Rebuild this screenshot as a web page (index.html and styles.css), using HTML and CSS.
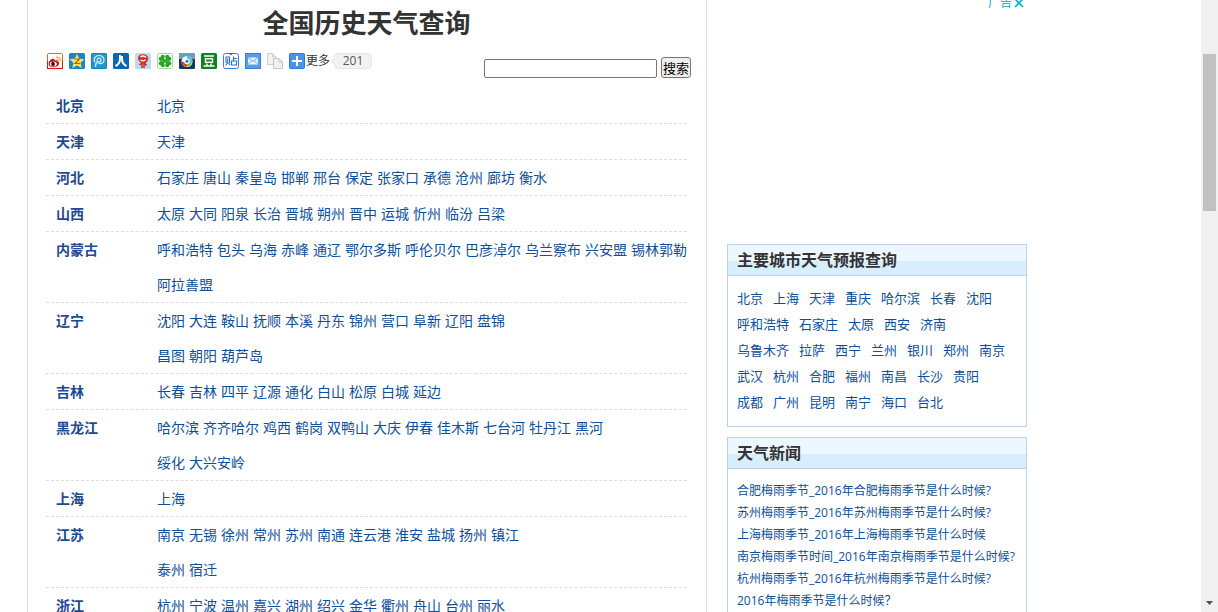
FILE: index.html
```html
<!DOCTYPE html>
<html lang="zh-CN">

<head>
  <meta charset="UTF-8" />
  <meta name="viewport" content="width=device-width, initial-scale=1.0" />
  <title>全国历史天气查询</title>
  <link rel="stylesheet" href="styles.css">
</head>

<body>
  <div class="viewport">
    <div class="wrap">
      <main class="main">
        <h1>全国历史天气查询</h1>
        <div class="toolbar">
          <div class="share">
            <a href="#" title="新浪微博"><svg viewBox="0 0 16 16"><rect x=".5" y=".5" width="15" height="15" rx="1" fill="#fff" stroke="#f0601f"/><path d="M0 15.500h16M.5 8v7M15.500 8v7" stroke="#d8191f"/><path d="M1.500 11c0-3 3.500-6 5.500-5 1 .4.500 1.500.5 1.500s3-1 3.200.8c2 .7 2 3.200 0 4.700C8 15 1.500 14.500 1.500 11z" fill="#d5141d"/><ellipse cx="6.300" cy="11" rx="3.500" ry="2.300" fill="#fff"/><circle cx="6" cy="11" r="1.900" fill="#111"/><path d="M9 4.200c3-.8 5 1.200 4.300 4.300M9.500 6.200c1.500-.2 2.200.5 1.900 1.900" fill="none" stroke="#f4a11a" stroke-width="1.100"/></svg></a>
            <a href="#" title="QQ空间"><svg viewBox="0 0 16 16"><rect width="16" height="16" rx="1.500" fill="#1684ce"/><path d="M8 .8l2.200 4.800 5.300.6-3.900 3.600 1.100 5.200L8 12.400 3.300 15l1.100-5.200L.5 6.200l5.300-.6z" fill="#ffe04a"/><path d="M5.500 6h5L6 10.500h5" fill="none" stroke="#a36b13" stroke-width="1.200"/></svg></a>
            <a href="#" title="腾讯微博"><svg viewBox="0 0 16 16"><rect width="16" height="16" rx="1.500" fill="#2698c8"/><rect x=".5" y=".5" width="15" height="15" rx="1" fill="none" stroke="#1685b3"/><path d="M4.200 9.500C1.500 5 5 2.500 8 2.500c4 0 6 3 4.700 6-1 2.300-4 2.700-5.200 1.500M10 7c0 1.200-1 2-2 2S6.200 8.200 6.200 7 7 5.200 8 5.200 10 5.900 10 7zM6.500 8.500C5 10 4.500 12 4.500 14" fill="none" stroke="#d4f1fb" stroke-width="1.200"/></svg></a>
            <a href="#" title="人人网"><svg viewBox="0 0 16 16"><rect width="16" height="16" rx="1.500" fill="#0866b2"/><path d="M7 2v4c0 3-1.500 5.500-4.500 7M9 3v3c0 3 1.500 5.500 4.500 7" fill="none" stroke="#fff" stroke-width="2"/></svg></a>
            <a href="#" title="开心网"><svg viewBox="0 0 16 16"><rect width="16" height="16" rx="1.500" fill="#b9dcf4"/><path d="M3 5C3 2 6 .8 8.500 1.200 12 1.500 14 4 13 7c-.6 2.300-2.500 3.500-4.500 3.500S3 8.500 3 5z" fill="#e32920"/><path d="M5.500 4c2-1.500 4-1 5.500.5M5.500 7c2 1.500 3.500 1 5-.3" fill="none" stroke="#fff" stroke-width="1.300"/><path d="M7 10l-2.500 2M7 10v5M9 10v5M9.500 10l2 2.500" stroke="#cf1d18" stroke-width="1.400"/></svg></a>
            <a href="#" title="朋友网"><svg viewBox="0 0 16 16"><rect x=".5" y=".5" width="15" height="15" rx="1" fill="#f8fff3" stroke="#a9d9a0"/><g fill="#26a52a"><circle cx="5.800" cy="3.700" r="2"/><circle cx="3.700" cy="5.800" r="2"/><circle cx="10.200" cy="3.700" r="2"/><circle cx="12.300" cy="5.800" r="2"/><circle cx="5.800" cy="12.300" r="2"/><circle cx="3.700" cy="10.200" r="2"/><circle cx="10.200" cy="12.300" r="2"/><circle cx="12.300" cy="10.200" r="2"/><path d="M3 7.500l3-4.500 2 4 2-4 3 4.500L9 8l4 .5-3 4.500-2-4-2 4-3-4.500L7 8z"/></g></svg></a>
            <a href="#" title="搜狐微博"><svg viewBox="0 0 16 16"><rect width="16" height="16" rx="1.500" fill="#12395f"/><path d="M0 1.500A1.500 1.500 0 011.500 0h13A1.500 1.500 0 0116 1.500V6H0z" fill="#6f9db5"/><circle cx="8" cy="8.500" r="5.500" fill="#f4fafc"/><path d="M8 2c3 1 5.500 3.500 5.500 7L11 10 8 5z" fill="#64b9e8"/><path d="M3 10c1 4.500 8 5 10-.5L10.500 9 8 11.500z" fill="#76b82f"/><path d="M2.500 8.500c0 3 2 5 5 5.200L8 11.500 5 9z" fill="#e03b25"/><circle cx="8" cy="8.500" r="2.800" fill="#fff"/><circle cx="8" cy="8.300" r="1.500" fill="#1976b6"/></svg></a>
            <a href="#" title="豆瓣"><svg viewBox="0 0 16 16"><rect width="16" height="16" rx="1.500" fill="#108020"/><path d="M3 3h10M4.500 5.800h7v3.400h-7zM5.500 10.500l1 2M10.500 10.500l-1 2M2.500 13h11" fill="none" stroke="#fff" stroke-width="1.400"/></svg></a>
            <a href="#" title="百度贴吧"><svg viewBox="0 0 16 16"><rect x=".5" y=".5" width="15" height="15" rx="2" fill="#fff" stroke="#377edb"/><path d="M6 0h4L8 2.500z" fill="#e31b1b"/><path d="M3 10V4h3.500v6M4.750 5.500v4L2.500 12.500M5.500 10l1.500 2M10.500 3.500v4M10.500 5.500H14M8.500 8h5v4h-5z" fill="none" stroke="#2a70d2" stroke-width="1.100"/></svg></a>
            <a href="#" title="邮件"><svg viewBox="0 0 16 16"><rect x=".5" y=".5" width="15" height="15" fill="#5a9cec" stroke="#3c7fd4"/><rect x="3" y="4.500" width="10" height="7" fill="#eaf4ff"/><path d="M3 4.500l5 4 5-4M3 11.500L6.500 8M13 11.500L9.500 8" fill="none" stroke="#6fa8ec"/></svg></a>
            <a href="#" title="复制网址"><svg viewBox="0 0 16 16"><path d="M.5.500h5L9 4v7.500H.5z" fill="#f1f1f1" stroke="#cfcfcf"/><path d="M5.500.5V4H9" fill="none" stroke="#cfcfcf"/><path d="M6.500 5.500H12l3.500 3.500v6.500h-9z" fill="#f1f1f1" stroke="#c4c4c4"/><path d="M12 5.500V9h3.500" fill="none" stroke="#c4c4c4"/></svg></a>
            <a href="#" class="more"><svg viewBox="0 0 16 16"><rect x=".5" y=".5" width="15" height="15" rx="1" fill="#4d93e8" stroke="#2f76d0"/><path d="M8 3v10M3 8h10" stroke="#fff" stroke-width="2"/></svg>更多</a>
            <a href="#" class="count">201</a>
          </div>
          <form class="search" action="#">
            <input type="text" name="keyword" aria-label="城市名称">
            <button type="submit">搜索</button>
          </form>
        </div>

        <dl class="province">
          <dt><a href="#">北京</a></dt>
          <dd>
            <p><a href="#">北京</a></p>
          </dd>
        </dl>
        <dl class="province">
          <dt><a href="#">天津</a></dt>
          <dd>
            <p><a href="#">天津</a></p>
          </dd>
        </dl>
        <dl class="province">
          <dt><a href="#">河北</a></dt>
          <dd>
            <p><a href="#">石家庄</a><a href="#">唐山</a><a href="#">秦皇岛</a><a href="#">邯郸</a><a href="#">邢台</a><a href="#">保定</a><a href="#">张家口</a><a href="#">承德</a><a href="#">沧州</a><a href="#">廊坊</a><a href="#">衡水</a></p>
          </dd>
        </dl>
        <dl class="province">
          <dt><a href="#">山西</a></dt>
          <dd>
            <p><a href="#">太原</a><a href="#">大同</a><a href="#">阳泉</a><a href="#">长治</a><a href="#">晋城</a><a href="#">朔州</a><a href="#">晋中</a><a href="#">运城</a><a href="#">忻州</a><a href="#">临汾</a><a href="#">吕梁</a></p>
          </dd>
        </dl>
        <dl class="province">
          <dt><a href="#">内蒙古</a></dt>
          <dd>
            <p><a href="#">呼和浩特</a><a href="#">包头</a><a href="#">乌海</a><a href="#">赤峰</a><a href="#">通辽</a><a href="#">鄂尔多斯</a><a href="#">呼伦贝尔</a><a href="#">巴彦淖尔</a><a href="#">乌兰察布</a><a href="#">兴安盟</a><a href="#">锡林郭勒</a></p>
            <p><a href="#">阿拉善盟</a></p>
          </dd>
        </dl>
        <dl class="province">
          <dt><a href="#">辽宁</a></dt>
          <dd>
            <p><a href="#">沈阳</a><a href="#">大连</a><a href="#">鞍山</a><a href="#">抚顺</a><a href="#">本溪</a><a href="#">丹东</a><a href="#">锦州</a><a href="#">营口</a><a href="#">阜新</a><a href="#">辽阳</a><a href="#">盘锦</a></p>
            <p><a href="#">昌图</a><a href="#">朝阳</a><a href="#">葫芦岛</a></p>
          </dd>
        </dl>
        <dl class="province">
          <dt><a href="#">吉林</a></dt>
          <dd>
            <p><a href="#">长春</a><a href="#">吉林</a><a href="#">四平</a><a href="#">辽源</a><a href="#">通化</a><a href="#">白山</a><a href="#">松原</a><a href="#">白城</a><a href="#">延边</a></p>
          </dd>
        </dl>
        <dl class="province">
          <dt><a href="#">黑龙江</a></dt>
          <dd>
            <p><a href="#">哈尔滨</a><a href="#">齐齐哈尔</a><a href="#">鸡西</a><a href="#">鹤岗</a><a href="#">双鸭山</a><a href="#">大庆</a><a href="#">伊春</a><a href="#">佳木斯</a><a href="#">七台河</a><a href="#">牡丹江</a><a href="#">黑河</a></p>
            <p><a href="#">绥化</a><a href="#">大兴安岭</a></p>
          </dd>
        </dl>
        <dl class="province">
          <dt><a href="#">上海</a></dt>
          <dd>
            <p><a href="#">上海</a></p>
          </dd>
        </dl>
        <dl class="province">
          <dt><a href="#">江苏</a></dt>
          <dd>
            <p><a href="#">南京</a><a href="#">无锡</a><a href="#">徐州</a><a href="#">常州</a><a href="#">苏州</a><a href="#">南通</a><a href="#">连云港</a><a href="#">淮安</a><a href="#">盐城</a><a href="#">扬州</a><a href="#">镇江</a></p>
            <p><a href="#">泰州</a><a href="#">宿迁</a></p>
          </dd>
        </dl>
        <dl class="province">
          <dt><a href="#">浙江</a></dt>
          <dd>
            <p><a href="#">杭州</a><a href="#">宁波</a><a href="#">温州</a><a href="#">嘉兴</a><a href="#">湖州</a><a href="#">绍兴</a><a href="#">金华</a><a href="#">衢州</a><a href="#">舟山</a><a href="#">台州</a><a href="#">丽水</a></p>
          </dd>
        </dl>
      </main>

      <aside class="side">
        <div class="ad">
          <span>广告</span>
          <svg viewBox="0 0 10 8"><path d="M1-1l8 8M9-1L1 7" stroke="#00aecd" stroke-width="1.600"/></svg>
        </div>

        <section class="box">
          <h2>主要城市天气预报查询</h2>
          <div class="cities">
            <p><a href="#">北京</a><a href="#">上海</a><a href="#">天津</a><a href="#">重庆</a><a href="#">哈尔滨</a><a href="#">长春</a><a href="#">沈阳</a></p>
            <p><a href="#">呼和浩特</a><a href="#">石家庄</a><a href="#">太原</a><a href="#">西安</a><a href="#">济南</a></p>
            <p><a href="#">乌鲁木齐</a><a href="#">拉萨</a><a href="#">西宁</a><a href="#">兰州</a><a href="#">银川</a><a href="#">郑州</a><a href="#">南京</a></p>
            <p><a href="#">武汉</a><a href="#">杭州</a><a href="#">合肥</a><a href="#">福州</a><a href="#">南昌</a><a href="#">长沙</a><a href="#">贵阳</a></p>
            <p><a href="#">成都</a><a href="#">广州</a><a href="#">昆明</a><a href="#">南宁</a><a href="#">海口</a><a href="#">台北</a></p>
          </div>
        </section>

        <section class="box">
          <h2>天气新闻</h2>
          <ul class="news">
            <li><a href="#">合肥梅雨季节_2016年合肥梅雨季节是什么时候?</a></li>
            <li><a href="#">苏州梅雨季节_2016年苏州梅雨季节是什么时候?</a></li>
            <li><a href="#">上海梅雨季节_2016年上海梅雨季节是什么时候</a></li>
            <li><a href="#">南京梅雨季节时间_2016年南京梅雨季节是什么时候?</a></li>
            <li><a href="#">杭州梅雨季节_2016年杭州梅雨季节是什么时候?</a></li>
            <li><a href="#">2016年梅雨季节是什么时候？</a></li>
          </ul>
        </section>
      </aside>
    </div>

    <div class="scrollbar">
      <div class="thumb"></div>
      <svg viewBox="0 0 7 4"><path d="M0 0h7L3.500 4z" fill="#505050"/></svg>
    </div>
  </div>
</body>

</html>
```
FILE: styles.css
```css
body,
dl,
dd,
form,
h1,
h2,
p,
ul {
  margin: 0;
  padding: 0;
}

body {
  background: #fff;
  color: #333;
  font-family: "Open Sans", "Noto Sans CJK SC", sans-serif;
  font-size: 14px;
}

a {
  color: #0d4f99;
  text-decoration: none;
  white-space: nowrap;
}

a:hover {
  text-decoration: underline;
}

svg {
  display: block;
}

.viewport {
  display: flex;
  justify-content: space-between;
  height: 100vh;
  overflow: hidden;
}

.wrap {
  display: flex;
  flex: 1;
  gap: 20px;
  max-width: 1000px;
  margin-left: 27px;
}

/* left column */
.main {
  flex: 1;
  min-width: 0;
  padding: 0 19px 0 18px;
  border: 1px solid #ddd;
  border-width: 0 1px;
}

h1 {
  font-size: 26px;
  line-height: 46px;
  text-align: center;
}

.toolbar {
  display: flex;
  justify-content: space-between;
  height: 42px;
  margin-right: -4px;
  padding-left: 1px;
}

.share {
  display: flex;
  align-items: center;
  gap: 6px;
  height: 30px;
}

.share svg {
  width: 16px;
  height: 16px;
}

.share .more {
  display: flex;
  align-items: center;
  gap: 1px;
  color: #333;
  font-size: 12px;
  line-height: 16px;
}

.share .count {
  position: relative;
  width: 36px;
  margin-left: -2px;
  border: 1px solid #e8e8e8;
  border-radius: 4px;
  background: #f2f2f2;
  color: #555;
  font-size: 12px;
  line-height: 14px;
  text-align: center;
}

/* bubble pointer */
.share .count::before {
  content: "";
  position: absolute;
  top: 5px;
  left: -3px;
  width: 4px;
  height: 4px;
  border: 1px solid #e8e8e8;
  border-width: 0 0 1px 1px;
  background: #f2f2f2;
  transform: rotate(45deg);
}

.search {
  display: flex;
  align-items: flex-end;
  gap: 4px;
  height: 32px;
}

.search input {
  box-sizing: border-box;
  width: 173px;
  height: 19px;
  border: 1px solid #767676;
  border-radius: 2px;
}

.search button {
  height: 21px;
  padding: 0 1px;
  border: 1px solid #767676;
  border-radius: 3px;
  background: #efefef;
  color: #000;
  font-family: inherit;
  font-size: 13px;
  line-height: 18px;
}

.province {
  display: flex;
  line-height: 35px;
  border-bottom: 1px dashed #ddd;
}

.province dt {
  width: 102px;
  box-sizing: border-box;
  flex: none;
  width: 111px;
  padding-left: 10px;
  font-weight: bold;
}

.province dt a {
  color: #1e4a8f;
}

.province dd {
  flex: 1;
  min-width: 0;
}

.province p {
  display: flex;
  gap: 4px;
}

/* right column */
.side {
  width: 300px;
}

.ad {
  display: flex;
  justify-content: flex-end;
  gap: 2px;
  height: 244px;
  padding-right: 3px;
  color: #00aecd;
  font-size: 12px;
  line-height: 6px;
}

.ad svg {
  width: 10px;
  height: 8px;
}

.box {
  margin-bottom: 10px;
  border: 1px solid #b9d5e8;
}

.box h2 {
  padding-left: 9px;
  border-bottom: 1px solid #b9d5e8;
  background: linear-gradient(#ecf7ff 16px, #d7eeff 16px);
  font-size: 16px;
  line-height: 30px;
}

.cities {
  padding: 9px 9px 11px;
  font-size: 13px;
  line-height: 26px;
}

.cities p {
  display: flex;
  gap: 10px;
}

.news {
  padding: 11px 9px;
  font-size: 12px;
  line-height: 22px;
  list-style: none;
}

/* page scrollbar */
.scrollbar {
  display: flex;
  flex-direction: column;
  align-items: center;
  justify-content: space-between;
  box-sizing: border-box;
  width: 17px;
  padding: 54px 0 7px;
  background: #f0f0f0;
}

.scrollbar .thumb {
  width: 13px;
  height: 157px;
  background: #c1c1c1;
}

.scrollbar svg {
  width: 7px;
  height: 4px;
}
```
